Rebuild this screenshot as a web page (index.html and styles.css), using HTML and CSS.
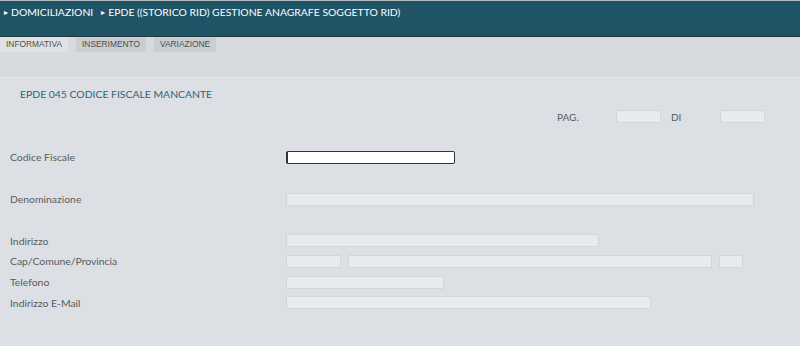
FILE: index.html
```html
<!DOCTYPE html>
<html lang="it">
<head>
    <meta charset="UTF-8">
    <title>EPDE Gestione Anagrafe Soggetto RID</title>
    <link rel="stylesheet" href="styles.css">
</head>
<body>

    <header class="topbar">
        <span class="crumb"><span class="arrow">&#9656;</span>DOMICILIAZIONI</span>
        <span class="crumb"><span class="arrow">&#9656;</span>EPDE ((STORICO RID) GESTIONE ANAGRAFE SOGGETTO RID)</span>
    </header>

    <div class="tabbar">
        <div class="tabs">
            <span class="tab active">INFORMATIVA</span>
            <span class="tab">INSERIMENTO</span>
            <span class="tab">VARIAZIONE</span>
        </div>
    </div>

    <div class="content">
        <h2 class="title">EPDE 045 CODICE FISCALE MANCANTE</h2>

        <div class="pager">
            <span class="pager-label">PAG.</span>
            <input type="text" class="field pager-box">
            <span class="pager-label di">DI</span>
            <input type="text" class="field pager-box">
        </div>

        <div class="row first">
            <label>Codice Fiscale</label>
            <input type="text" class="field focus w-cf">
        </div>

        <div class="row gap">
            <label>Denominazione</label>
            <input type="text" class="field w-den">
        </div>

        <div class="row gap">
            <label>Indirizzo</label>
            <input type="text" class="field w-ind">
        </div>
        <div class="row">
            <label>Cap/Comune/Provincia</label>
            <div class="group">
                <input type="text" class="field w-cap">
                <input type="text" class="field w-com">
                <input type="text" class="field w-prov">
            </div>
        </div>
        <div class="row">
            <label>Telefono</label>
            <input type="text" class="field w-tel">
        </div>
        <div class="row">
            <label>Indirizzo E-Mail</label>
            <input type="text" class="field w-mail">
        </div>
    </div>

</body>
</html>
```

FILE: styles.css
```css
body {
    margin: 0;
    padding: 0;
    background-color: #dcdfe3;
    font-family: Lato, "Open Sans", sans-serif;
    color: #585c5f;
    height: 346px;
    overflow: hidden;
}

.topbar {
    height: 37px;
    box-sizing: border-box;
    background-color: #1f5366;
    border-top: 1px solid #b2b9be;
    border-bottom: 1px solid #27363d;
    color: #fff;
    font-size: 10.4px;
    padding: 5px 0 0 4px;
    display: flex;
    gap: 8px;
}
.arrow {
    font-size: 8px;
    margin-right: 3px;
    position: relative;
    top: -1px;
}

.tabbar {
    height: 40px;
    background-color: #d6dadd;
    border-bottom: 1px solid #e4e7ea;
}
.tabs {
    display: flex;
    gap: 8px;
    height: 15px;
}
.tab {
    font-family: "Liberation Sans", Arial, sans-serif;
    font-size: 8.4px;
    color: #4d4d4d;
    background-color: #c8ced4;
    padding: 0 6px;
    line-height: 15px;
}
.tab.active {
    background-color: #dfe2e5;
}

.content {
    padding: 10px 0 0 10px;
}
.title {
    margin: 0 0 0 10px;
    font-size: 10.4px;
    font-weight: normal;
    color: #2f6478;
    line-height: 12px;
}

.pager {
    display: flex;
    align-items: center;
    margin: 10px 0 0 547px;
    font-size: 10px;
}
.pager-label {
    width: 59px;
}
.pager-label.di {
    width: 49px;
    margin-left: 10px;
}
.pager-box {
    width: 45px;
}

.row {
    display: flex;
    align-items: center;
    height: 20.7px;
}
.row.first {
    margin-top: 24px;
}
.row.gap {
    margin-top: 21px;
}
.row label {
    width: 276px;
    font-size: 10.4px;
}
.group {
    display: flex;
    gap: 7px;
}

.field {
    height: 13px;
    box-sizing: border-box;
    background-color: #e8eaed;
    border: 1px solid #d2d6da;
    border-radius: 1px;
    margin: 0;
    padding: 0;
}
.field.focus {
    background-color: #fff;
    border: 1px solid #333;
    border-left-width: 2px;
    border-radius: 2px;
}

.w-cf { width: 169px; }
.w-den { width: 468px; }
.w-ind { width: 313px; }
.w-cap { width: 55px; }
.w-com { width: 364px; }
.w-prov { width: 24px; }
.w-tel { width: 158px; }
.w-mail { width: 365px; }
```
